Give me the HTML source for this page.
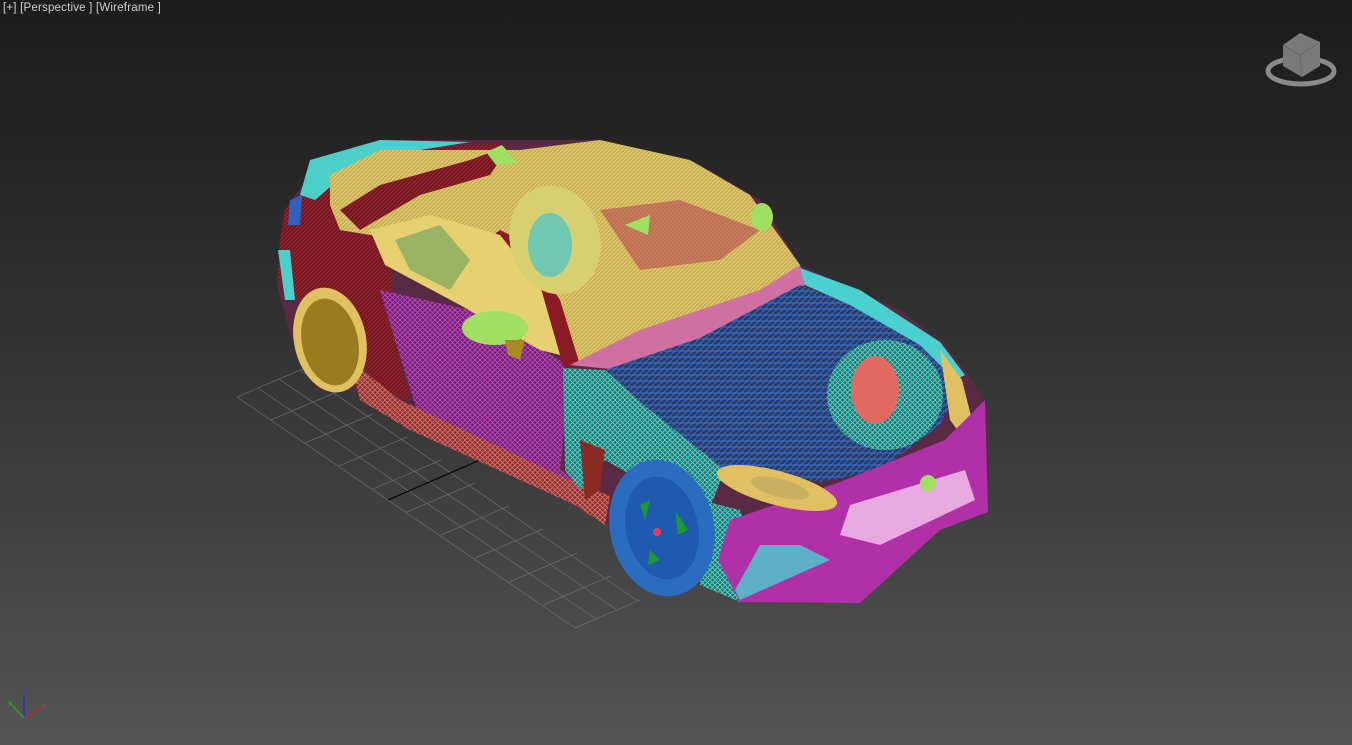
<!DOCTYPE html>
<html><head><meta charset="utf-8"><style>
html,body{margin:0;padding:0;}
body{width:1352px;height:745px;overflow:hidden;background:linear-gradient(#1c1c1c 0%,#2a2a2a 30%,#3e3e3e 65%,#555 100%);position:relative;font-family:"Liberation Sans",sans-serif;}
.lbl{position:absolute;left:3px;top:2px;color:#cfcfcf;font-size:11.5px;letter-spacing:0.2px;}
svg{position:absolute;left:0;top:0;}
</style></head><body>
<div class="lbl">[+] [Perspective ] [Wireframe ]</div>
<svg width="1352" height="745" viewBox="0 0 1352 745">
<defs>
<pattern id="hy" width="4" height="4" patternUnits="userSpaceOnUse"><rect width="4" height="4" fill="#c8b058"/><path d="M0 4L4 0" stroke="#e8d070" stroke-width="1"/></pattern>
<pattern id="hm" width="5" height="5" patternUnits="userSpaceOnUse"><rect width="5" height="5" fill="#6a2470"/><path d="M0 5L5 0M0 0L5 5" stroke="#c848c0" stroke-width="0.8"/></pattern>
<pattern id="hb" width="6" height="6" patternUnits="userSpaceOnUse"><rect width="6" height="6" fill="#2a3c6a"/><path d="M0 6L6 0M0 3H6" stroke="#3a70c8" stroke-width="1"/></pattern>
<pattern id="hr" width="4" height="4" patternUnits="userSpaceOnUse"><rect width="4" height="4" fill="#6e1a22"/><path d="M0 4L4 0" stroke="#a82030" stroke-width="1"/></pattern>
<pattern id="hc" width="5" height="5" patternUnits="userSpaceOnUse"><rect width="5" height="5" fill="#2f6e70"/><path d="M0 5L5 0M0 0L5 5" stroke="#50e0d0" stroke-width="0.8"/></pattern>
<pattern id="hs" width="5" height="5" patternUnits="userSpaceOnUse"><rect width="5" height="5" fill="#7a3a3a"/><path d="M0 5L5 0M0 0L5 5" stroke="#f06a60" stroke-width="0.8"/></pattern>
</defs>
<!-- grid -->
<g stroke="#777" stroke-width="0.7" fill="none" opacity="0.8">
<path d="M237 397L575 628M258 388L596 619M279 379L617 610M300 370L638 601"/>
<path d="M237 397L305 368M271 420L339 391M305 443L373 414M339 466L407 437M373 489L441 460M407 512L475 483M441 535L509 506M475 558L543 529M509 582L577 553M543 605L611 576M575 628L640 600"/>
</g>
<line x1="388" y1="500" x2="480" y2="460" stroke="#000" stroke-width="1"/>
<!-- body base -->
<path d="M285 210L320 160L380 140L600 140L700 165L760 200L800 265L900 310L945 345L972 380L988 410L988 510L940 530L860 602L740 602L700 585L610 525L420 420L360 392L318 390L292 340L277 285L280 240Z" fill="#5a2a44"/>
<!-- rear red -->
<path d="M280 240L285 210L320 175L400 150L500 143L480 175L420 200L390 260L395 340L410 400L380 390L340 330L300 300L278 280Z" fill="url(#hr)"/>
<path d="M278 250L290 250L295 300L285 300Z" fill="#4ccfc8"/>
<path d="M310 160L380 140L470 142L420 150L350 170L315 200L300 195Z" fill="#4ccfc8"/>
<path d="M290 200L302 195L300 225L288 225Z" fill="#3060c0"/>
<!-- side magenta -->
<path d="M380 290L470 310L560 360L570 372L560 470L600 490L590 500L420 420L395 340Z" fill="url(#hm)"/>
<!-- salmon sill -->
<path d="M350 360L400 400L565 478L610 496L605 525L575 505L410 430L360 400Z" fill="url(#hs)"/>
<!-- rear wheel -->
<ellipse cx="330" cy="340" rx="36" ry="53" fill="#e0c060" transform="rotate(-12 330 340)"/>
<ellipse cx="330" cy="342" rx="28" ry="44" fill="#9a7c20" transform="rotate(-12 330 342)"/>
<!-- roof yellow -->
<path d="M330 175L380 150L470 150L520 150L600 140L690 160L750 195L800 265L760 300L700 330L620 350L575 365L545 320L500 280L440 250L400 240L340 230L330 205Z" fill="url(#hy)"/>
<path d="M340 210L380 185L470 160L510 145L490 175L420 195L360 230Z" fill="url(#hr)"/>
<!-- red pillar -->
<path d="M500 230L520 240L560 300L580 365L565 370L545 320L510 270L480 245Z" fill="#8a1a24"/>
<path d="M600 210L680 200L760 230L720 260L640 270Z" fill="#b84850" opacity="0.6"/>
<!-- side window -->
<path d="M370 230L430 215L500 235L540 285L560 355L540 350L460 305L385 265Z" fill="#e6d070"/>
<path d="M395 240L440 225L470 260L450 290L410 270Z" fill="#7aa860" opacity="0.7"/>
<ellipse cx="555" cy="240" rx="45" ry="55" fill="#d8d070" transform="rotate(-15 555 240)"/>
<ellipse cx="550" cy="245" rx="22" ry="32" fill="#70c8b0"/>
<!-- mirrors -->
<ellipse cx="495" cy="328" rx="33" ry="17" fill="#a0e060"/>
<path d="M505 340L525 340L520 360L508 355Z" fill="#a88a20"/>
<ellipse cx="762" cy="217" rx="11" ry="14" fill="#a0e060"/>
<path d="M486 152L502 145L518 163L496 165Z" fill="#a0e060"/>
<path d="M625 225L650 215L648 235Z" fill="#a0e060"/>
<!-- windscreen lower & cowl -->
<path d="M570 365L640 330L760 290L800 265L805 285L720 330L620 370Z" fill="#d070a0"/>
<!-- cyan fender -->
<path d="M563 368L605 370L650 410L725 470L705 520L640 480L605 460L580 490L565 470Z" fill="url(#hc)"/>
<path d="M580 440L605 450L600 490L585 500Z" fill="#8a2a20"/>
<!-- hood blue -->
<path d="M605 370L700 338L800 285L860 308L942 345L962 380L940 425L880 470L820 482L725 470L650 410Z" fill="url(#hb)"/>
<path d="M800 268L860 290L940 342L965 375L955 380L920 345L850 305L805 285Z" fill="#4ad0d0"/>
<!-- headlamp cluster -->
<ellipse cx="885" cy="395" rx="58" ry="55" fill="url(#hc)"/>
<ellipse cx="875" cy="390" rx="24" ry="34" fill="#e06a60"/>
<path d="M940 350L962 380L972 420L965 440L950 420Z" fill="#e0c060"/>
<!-- wheel arch front -->
<path d="M700 500L740 510L760 560L740 602L700 585L690 540Z" fill="url(#hc)"/>
<!-- front fascia magenta -->
<path d="M760 510L840 482L945 440L985 400L988 512L940 530L860 603L740 602L718 560L730 520Z" fill="#b030a8"/>
<path d="M850 505L965 470L975 500L880 545L840 535Z" fill="#e8a8e0"/>
<path d="M760 545L800 545L830 560L740 600L735 590Z" fill="#4ad0d0" opacity="0.8"/>
<ellipse cx="928" cy="483" rx="8" ry="8" fill="#a0e060"/>
<!-- headlight -->
<ellipse cx="777" cy="488" rx="62" ry="17" fill="#e0c060" transform="rotate(15 777 488)"/>
<ellipse cx="780" cy="488" rx="30" ry="9" fill="#c8b060" transform="rotate(15 780 488)"/>
<!-- front wheel -->
<ellipse cx="662" cy="528" rx="52" ry="69" fill="#2a6cc0" transform="rotate(-12 662 528)"/>
<ellipse cx="662" cy="528" rx="36" ry="52" fill="#1e5ab0" transform="rotate(-12 662 528)"/>
<path d="M640 505L650 500L645 520Z M675 510L688 530L678 535Z M650 550L660 560L648 565Z" fill="#1a9a30"/>
<circle cx="657" cy="532" r="4" fill="#e04060"/>
</svg>
<svg width="1352" height="745" viewBox="0 0 1352 745">
<ellipse cx="1301" cy="71" rx="33" ry="13" fill="none" stroke="#8a8a8a" stroke-width="5"/>
<path d="M1283 45L1300 33L1320 42L1320 66L1302 77L1283 66Z" fill="#7a7a7a"/>
<path d="M1283 45L1300 55L1320 42M1300 55L1302 77" stroke="#6a6a6a" fill="none"/>
<line x1="24" y1="718" x2="24" y2="695" stroke="#3030c0" stroke-width="1.5"/>
<line x1="24" y1="718" x2="44" y2="706" stroke="#b03030" stroke-width="1.5"/>
<line x1="24" y1="718" x2="10" y2="703" stroke="#30a030" stroke-width="1.5"/>
<text x="24" y="693" fill="#4040d0" font-size="8" font-family="Liberation Sans">z</text>
<text x="43" y="708" fill="#c04040" font-size="7" font-family="Liberation Sans">x</text>
<text x="8" y="705" fill="#40a040" font-size="7" font-family="Liberation Sans">y</text>
</svg>
</body></html>
